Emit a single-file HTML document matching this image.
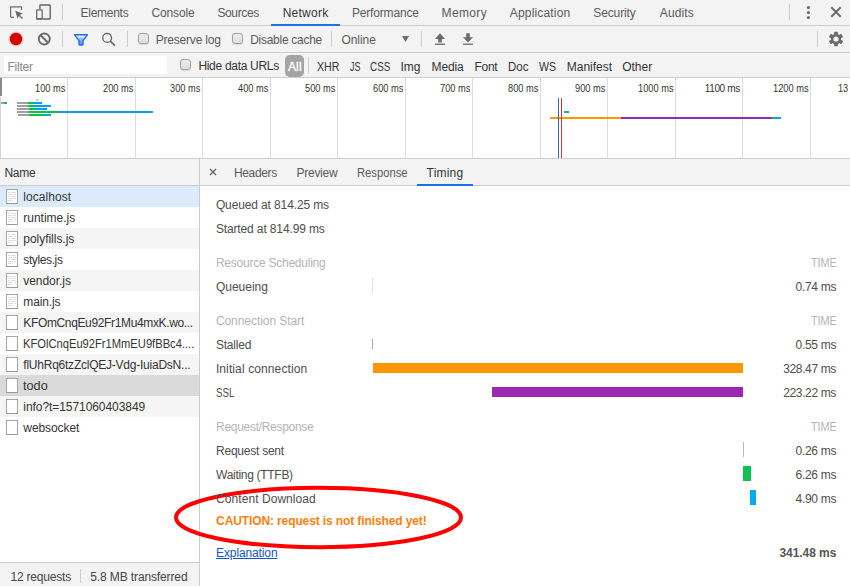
<!DOCTYPE html>
<html><head><meta charset="utf-8">
<style>
*{box-sizing:border-box;margin:0;padding:0}
html,body{width:850px;height:586px;overflow:hidden;background:#fff}
body{font-family:"Liberation Sans",sans-serif;font-size:12px;color:#333;position:relative}
.a{position:absolute;white-space:nowrap}
.t{position:absolute;white-space:nowrap;line-height:14px;height:14px}
.bar{position:absolute;left:0;width:850px;background:#f3f3f3}
.vl{position:absolute;width:1px;background:#ccc}
.hl{position:absolute;height:1px;background:#ccc}
.cb{position:absolute;width:11px;height:11px;border:1px solid #a0a0a0;border-radius:3px;background:linear-gradient(#ececec,#dedede);box-shadow:0 1px 1px rgba(0,0,0,0.12)}
.r{text-align:right}
.g{color:#aaa}
.ovl{font-size:10px;text-align:right;color:#333}
.ic{position:absolute;width:12px;height:15px;border:1px solid #a6a6a6;border-bottom-color:#989898;background:#fff}
.ic i{position:absolute;height:1px;background:#dcdcdc}
.d{color:#444}
</style></head><body>

<!-- top tab bar -->
<div class="bar" style="top:0;height:26px;border-bottom:1px solid #ccc"></div>
<div class="vl" style="left:62px;top:4px;height:16px"></div>
<div class="a" style="left:271px;top:24px;width:69px;height:2px;background:#1a73e8"></div>
<div class="vl" style="left:789px;top:4px;height:16px"></div>

<!-- second toolbar -->
<div class="bar" style="top:26px;height:27px;border-bottom:1px solid #ccc"></div>
<div class="vl" style="left:62px;top:31px;height:16px"></div>
<div class="vl" style="left:127px;top:31px;height:16px"></div>
<div class="cb" style="left:138px;top:33px"></div>
<div class="cb" style="left:232px;top:33px"></div>
<div class="vl" style="left:331px;top:31px;height:16px"></div>
<div class="vl" style="left:421px;top:31px;height:16px"></div>
<div class="vl" style="left:817px;top:31px;height:16px"></div>


<!-- icons -->
<svg class="a" style="left:0;top:0" width="850" height="53" viewBox="0 0 850 53">
<!-- inspect -->
<path d="M14 17.3 H11.4 Q10.6 17.3 10.6 16.5 V7.6 Q10.6 6.8 11.4 6.8 H20.7 Q21.5 6.8 21.5 7.6 V10" fill="none" stroke="#6b6b6b" stroke-width="1.2"/>
<path d="M15.2 10.8 L22.8 13.6 L19.9 14.9 L23 18 L22 19 L18.9 15.9 L17.6 18.8 Z" fill="#6b6b6b"/>
<!-- device -->
<path d="M39.9 9 V5.6 Q39.9 5 40.5 5 H49.6 Q50.2 5 50.2 5.6 V18.4 Q50.2 19 49.6 19 H43" fill="none" stroke="#666" stroke-width="1.4"/>
<rect x="36.7" y="9.9" width="5.5" height="9.1" rx="0.5" fill="none" stroke="#6b6b6b" stroke-width="1.3"/><rect x="36.1" y="18" width="6.7" height="1.6" fill="#6b6b6b"/>
<!-- dots -->
<circle cx="808.4" cy="7.5" r="1.6" fill="#6b6b6b"/><circle cx="808.4" cy="12.6" r="1.6" fill="#6b6b6b"/><circle cx="808.4" cy="17.6" r="1.6" fill="#6b6b6b"/>
<!-- close -->
<path d="M831.3 7.3 L840.7 16.7 M840.7 7.3 L831.3 16.7" stroke="#6b6b6b" stroke-width="2" fill="none"/>
<!-- record -->
<circle cx="16" cy="39" r="7.6" fill="#f6c5c5"/>
<circle cx="16" cy="39" r="6.2" fill="#d60000"/>
<!-- clear -->
<circle cx="44.3" cy="39" r="5.5" fill="none" stroke="#6b6b6b" stroke-width="1.9"/>
<path d="M40.3 35 L48.3 43" stroke="#6b6b6b" stroke-width="1.9"/>
<!-- funnel -->
<defs><linearGradient id="fg" x1="0" y1="0" x2="0" y2="1"><stop offset="0.15" stop-color="#e6eefc"/><stop offset="0.45" stop-color="#8db6f6"/><stop offset="1" stop-color="#4f8ef0"/></linearGradient></defs><path d="M74.6 34.8 H87.4 L83 40.6 V44.3 Q83 45 82.3 45 H79.7 Q79 45 79 44.3 V40.6 Z" fill="url(#fg)" stroke="#1a6ff0" stroke-width="1.4" stroke-linejoin="round"/>
<!-- search -->
<circle cx="107.1" cy="37.9" r="4.4" fill="none" stroke="#6b6b6b" stroke-width="1.4"/>
<path d="M110.2 41.2 L115 45.7" stroke="#6b6b6b" stroke-width="1.7"/>
<!-- dropdown -->
<path d="M402 36 H409 L405.5 42 Z" fill="#6b6b6b"/>
<!-- upload -->
<path d="M440 33.2 L445 39 H441.8 V42.5 H438.2 V39 H435 Z" fill="#6b6b6b"/>
<rect x="435" y="43.6" width="10" height="1.3" fill="#6b6b6b"/>
<!-- download -->
<path d="M466.2 33.2 H469.8 V37.2 H473 L468 42.6 L463 37.2 H466.2 Z" fill="#6b6b6b"/>
<rect x="463" y="43.6" width="10" height="1.3" fill="#6b6b6b"/>
<!-- gear -->
<g transform="translate(836 39)" fill="#6b6b6b">
<circle r="5.2"/>
<g id="tg"><rect x="-1.9" y="-7.2" width="3.8" height="14.4" rx="0.6"/></g>
<rect x="-1.9" y="-7.2" width="3.8" height="14.4" rx="0.6" transform="rotate(60)"/>
<rect x="-1.9" y="-7.2" width="3.8" height="14.4" rx="0.6" transform="rotate(120)"/>
<circle r="2.6" fill="#f3f3f3"/>
</g>
</svg>
<!-- filter bar -->
<div class="bar" style="top:53px;height:25px;border-bottom:1px solid #ccc"></div>
<div class="a" style="left:4px;top:56px;width:163px;height:18px;background:#fff"></div>
<div class="cb" style="left:180px;top:59px"></div>
<div class="a" style="left:285px;top:55px;width:19px;height:22px;border-radius:5px;background:#a3a3a3"></div>
<div class="vl" style="left:308px;top:57px;height:16px"></div>

<!-- overview -->
<div id="ov" class="a" style="left:0;top:78px;width:850px;height:81px;background:#fff;border-bottom:1px solid #ccc"></div>

<div class="vl" style="left:67px;top:78px;height:80px;background:#ddd"></div>
<div class="vl" style="left:135px;top:78px;height:80px;background:#ddd"></div>
<div class="vl" style="left:202px;top:78px;height:80px;background:#ddd"></div>
<div class="vl" style="left:270px;top:78px;height:80px;background:#ddd"></div>
<div class="vl" style="left:337px;top:78px;height:80px;background:#ddd"></div>
<div class="vl" style="left:405px;top:78px;height:80px;background:#ddd"></div>
<div class="vl" style="left:472px;top:78px;height:80px;background:#ddd"></div>
<div class="vl" style="left:540px;top:78px;height:80px;background:#ddd"></div>
<div class="vl" style="left:607px;top:78px;height:80px;background:#ddd"></div>
<div class="vl" style="left:675px;top:78px;height:80px;background:#ddd"></div>
<div class="vl" style="left:742px;top:78px;height:80px;background:#ddd"></div>
<div class="vl" style="left:810px;top:78px;height:80px;background:#ddd"></div>
<div class="a" style="left:0;top:78px;width:2px;height:18px;background:#8a8a8a"></div>
<div class="a" style="left:0;top:97px;width:1px;height:61px;background:#d4d4d4"></div>
<div class="a" style="left:16.5px;top:102px;width:11.7px;height:2px;background:#a0a0a0"></div>
<div class="a" style="left:28.2px;top:102px;width:4.9px;height:2px;background:#0cc04c"></div>
<div class="a" style="left:33.1px;top:102px;width:8.8px;height:2px;background:#03a1ef"></div>
<div class="a" style="left:16.5px;top:105px;width:11.7px;height:2px;background:#a0a0a0"></div>
<div class="a" style="left:28.2px;top:105px;width:5.8px;height:2px;background:#0cc04c"></div>
<div class="a" style="left:34px;top:105px;width:16.8px;height:2px;background:#03a1ef"></div>
<div class="a" style="left:17px;top:108px;width:11.7px;height:2px;background:#a0a0a0"></div>
<div class="a" style="left:28.7px;top:108px;width:5.9px;height:2px;background:#0cc04c"></div>
<div class="a" style="left:34.6px;top:108px;width:12.3px;height:2px;background:#03a1ef"></div>
<div class="a" style="left:17.4px;top:111px;width:11.3px;height:2px;background:#a0a0a0"></div>
<div class="a" style="left:28.7px;top:111px;width:29.2px;height:2px;background:#0cc04c"></div>
<div class="a" style="left:57.9px;top:111px;width:95.1px;height:2px;background:#03a1ef"></div>
<div class="a" style="left:17.9px;top:114px;width:10.8px;height:2px;background:#a0a0a0"></div>
<div class="a" style="left:28.7px;top:114px;width:16.0px;height:2px;background:#0cc04c"></div>
<div class="a" style="left:44.7px;top:114px;width:6.1px;height:2px;background:#03a1ef"></div>
<div class="a" style="left:1.4px;top:102px;width:2.2px;height:2px;background:#a0a0a0"></div>
<div class="a" style="left:3.6px;top:102px;width:2.0px;height:2px;background:#0cc04c"></div>
<div class="a" style="left:5.6px;top:102px;width:1.7px;height:2px;background:#03a1ef"></div>
<div class="a" style="left:36.2px;top:99px;width:2.6px;height:2px;background:#d0d0d0"></div>
<div class="a" style="left:550px;top:117px;width:71.4px;height:2px;background:#ff9800"></div>
<div class="a" style="left:621.4px;top:117px;width:150.2px;height:2px;background:#9c27b0"></div>
<div class="a" style="left:771.6px;top:117px;width:3.4px;height:2px;background:#0cc04c"></div>
<div class="a" style="left:775px;top:117px;width:6.0px;height:2px;background:#03a1ef"></div>
<div class="a" style="left:564px;top:111px;width:5.0px;height:2px;background:#26a0b5"></div>
<div class="a" style="left:558px;top:98px;width:1px;height:60px;background:#2a62d8"></div>
<div class="a" style="left:561px;top:98px;width:1px;height:60px;background:#c0392b"></div>
<!-- sidebar -->
<div class="a" style="left:0;top:159px;width:199px;height:27px;background:#f3f3f3;border-bottom:1px solid #ccc"></div>
<div class="vl" style="left:199px;top:159px;height:427px"></div>

<div class="a" style="left:0;top:186px;width:199px;height:21px;background:#dcebfb"></div>
<div class="ic" style="left:6px;top:189px"><i style="top:2px;left:1px;width:2px"></i><i style="top:2px;left:4px;width:5px"></i><i style="top:4px;left:1px;width:4px"></i><i style="top:4px;left:6px;width:3px"></i><i style="top:6px;left:1px;width:2px"></i><i style="top:6px;left:4px;width:5px"></i><i style="top:8px;left:1px;width:5px"></i><i style="top:8px;left:7px;width:2px"></i><i style="top:10px;left:1px;width:3px"></i><i style="top:10px;left:5px;width:1px"></i></div>
<div class="a" style="left:0;top:207px;width:199px;height:21px;background:#fff"></div>
<div class="ic" style="left:6px;top:210px"><i style="top:2px;left:1px;width:2px"></i><i style="top:2px;left:4px;width:5px"></i><i style="top:4px;left:1px;width:4px"></i><i style="top:4px;left:6px;width:3px"></i><i style="top:6px;left:1px;width:2px"></i><i style="top:6px;left:4px;width:5px"></i><i style="top:8px;left:1px;width:5px"></i><i style="top:8px;left:7px;width:2px"></i><i style="top:10px;left:1px;width:3px"></i><i style="top:10px;left:5px;width:1px"></i></div>
<div class="a" style="left:0;top:228px;width:199px;height:21px;background:#f5f5f5"></div>
<div class="ic" style="left:6px;top:231px"><i style="top:2px;left:1px;width:2px"></i><i style="top:2px;left:4px;width:5px"></i><i style="top:4px;left:1px;width:4px"></i><i style="top:4px;left:6px;width:3px"></i><i style="top:6px;left:1px;width:2px"></i><i style="top:6px;left:4px;width:5px"></i><i style="top:8px;left:1px;width:5px"></i><i style="top:8px;left:7px;width:2px"></i><i style="top:10px;left:1px;width:3px"></i><i style="top:10px;left:5px;width:1px"></i></div>
<div class="a" style="left:0;top:249px;width:199px;height:21px;background:#fff"></div>
<div class="ic" style="left:6px;top:252px"><i style="top:2px;left:1px;width:2px"></i><i style="top:2px;left:4px;width:5px"></i><i style="top:4px;left:1px;width:4px"></i><i style="top:4px;left:6px;width:3px"></i><i style="top:6px;left:1px;width:2px"></i><i style="top:6px;left:4px;width:5px"></i><i style="top:8px;left:1px;width:5px"></i><i style="top:8px;left:7px;width:2px"></i><i style="top:10px;left:1px;width:3px"></i><i style="top:10px;left:5px;width:1px"></i></div>
<div class="a" style="left:0;top:270px;width:199px;height:21px;background:#f5f5f5"></div>
<div class="ic" style="left:6px;top:273px"><i style="top:2px;left:1px;width:2px"></i><i style="top:2px;left:4px;width:5px"></i><i style="top:4px;left:1px;width:4px"></i><i style="top:4px;left:6px;width:3px"></i><i style="top:6px;left:1px;width:2px"></i><i style="top:6px;left:4px;width:5px"></i><i style="top:8px;left:1px;width:5px"></i><i style="top:8px;left:7px;width:2px"></i><i style="top:10px;left:1px;width:3px"></i><i style="top:10px;left:5px;width:1px"></i></div>
<div class="a" style="left:0;top:291px;width:199px;height:21px;background:#fff"></div>
<div class="ic" style="left:6px;top:294px"><i style="top:2px;left:1px;width:2px"></i><i style="top:2px;left:4px;width:5px"></i><i style="top:4px;left:1px;width:4px"></i><i style="top:4px;left:6px;width:3px"></i><i style="top:6px;left:1px;width:2px"></i><i style="top:6px;left:4px;width:5px"></i><i style="top:8px;left:1px;width:5px"></i><i style="top:8px;left:7px;width:2px"></i><i style="top:10px;left:1px;width:3px"></i><i style="top:10px;left:5px;width:1px"></i></div>
<div class="a" style="left:0;top:312px;width:199px;height:21px;background:#f5f5f5"></div>
<div class="ic" style="left:6px;top:315px"></div>
<div class="a" style="left:0;top:333px;width:199px;height:21px;background:#fff"></div>
<div class="ic" style="left:6px;top:336px"></div>
<div class="a" style="left:0;top:354px;width:199px;height:21px;background:#f5f5f5"></div>
<div class="ic" style="left:6px;top:357px"></div>
<div class="a" style="left:0;top:375px;width:199px;height:21px;background:#dadada"></div>
<div class="ic" style="left:6px;top:378px"></div>
<div class="a" style="left:0;top:396px;width:199px;height:21px;background:#f5f5f5"></div>
<div class="ic" style="left:6px;top:399px"></div>
<div class="a" style="left:0;top:417px;width:199px;height:21px;background:#fff"></div>
<div class="ic" style="left:6px;top:420px"></div>
<!-- detail tabs -->
<div class="a" style="left:200px;top:159px;width:650px;height:27px;background:#f3f3f3;border-bottom:1px solid #ccc"></div>

<div class="a" style="left:417px;top:184px;width:56px;height:2px;background:#1a73e8"></div>
<svg class="a" style="left:209px;top:168px" width="8" height="8" viewBox="0 0 8 8"><path d="M1 1 L7 7 M7 1 L1 7" stroke="#606060" stroke-width="1.3" fill="none"/></svg>
<div class="a" style="left:372px;top:278px;width:1px;height:15px;background:#e0e0e0"></div>
<div class="a" style="left:372px;top:339px;width:1px;height:10px;background:#aaa"></div>
<div class="a" style="left:373px;top:363px;width:370px;height:10px;background:#ff9800"></div>
<div class="a" style="left:492px;top:387px;width:251px;height:10px;background:#9c27b0"></div>
<div class="a" style="left:743px;top:442px;width:1px;height:15px;background:#b0bec5"></div>
<div class="a" style="left:743px;top:466px;width:8px;height:15px;background:#0cc250"></div>
<div class="a" style="left:750px;top:490px;width:6px;height:15px;background:#03a9f4"></div>
<svg class="a" style="left:0;top:0" width="850" height="586"><ellipse cx="318.5" cy="517.5" rx="142.5" ry="29.7" fill="none" stroke="#f00" stroke-width="4"/></svg>
<!-- status bar -->
<div class="a" style="left:0;top:562px;width:199px;height:24px;background:#f3f3f3;border-top:1px solid #ccc"></div>
<div class="vl" style="left:80px;top:569px;height:14px"></div>

<div class="t" style="left:80.5px;top:6px;letter-spacing:-0.262px;color:#5a5a5a">Elements</div>
<div class="t" style="left:151.4px;top:6px;letter-spacing:-0.122px;color:#5a5a5a">Console</div>
<div class="t" style="left:217.4px;top:6px;letter-spacing:-0.355px;color:#5a5a5a">Sources</div>
<div class="t" style="left:282.7px;top:6px;letter-spacing:0.247px;color:#333">Network</div>
<div class="t" style="left:351.9px;top:6px;letter-spacing:-0.160px;color:#5a5a5a">Performance</div>
<div class="t" style="left:441.6px;top:6px;letter-spacing:0.351px;color:#5a5a5a">Memory</div>
<div class="t" style="left:509.8px;top:6px;letter-spacing:0.168px;color:#5a5a5a">Application</div>
<div class="t" style="left:593.3px;top:6px;letter-spacing:-0.123px;color:#5a5a5a">Security</div>
<div class="t" style="left:659.8px;top:6px;letter-spacing:0.128px;color:#5a5a5a">Audits</div>
<div class="t" style="left:155.7px;top:33px;letter-spacing:-0.198px;color:#5a5a5a">Preserve log</div>
<div class="t" style="left:250.2px;top:33px;letter-spacing:-0.273px;color:#5a5a5a">Disable cache</div>
<div class="t" style="left:341.4px;top:33px;letter-spacing:-0.037px;color:#5a5a5a">Online</div>
<div class="t" style="left:7.5px;top:60px;letter-spacing:-0.234px;color:#8a8a8a">Filter</div>
<div class="t" style="left:198.4px;top:59px;letter-spacing:-0.301px;color:#333">Hide data URLs</div>
<div class="t" style="left:287.9px;top:60px;letter-spacing:0.228px;color:#fff;-webkit-text-stroke:0.35px #fff;text-shadow:0 1px 0 rgba(0,0,0,0.15)">All</div>
<div class="t" style="left:316.9px;top:60px;transform:scaleX(0.8878);transform-origin:0 0;color:#333">XHR</div>
<div class="t" style="left:349.8px;top:60px;transform:scaleX(0.7420);transform-origin:0 0;color:#333">JS</div>
<div class="t" style="left:370.2px;top:60px;transform:scaleX(0.8223);transform-origin:0 0;color:#333">CSS</div>
<div class="t" style="left:400.4px;top:60px;letter-spacing:-0.008px;color:#333">Img</div>
<div class="t" style="left:431.6px;top:60px;letter-spacing:-0.147px;color:#333">Media</div>
<div class="t" style="left:474.5px;top:60px;letter-spacing:-0.272px;color:#333">Font</div>
<div class="t" style="left:508.1px;top:60px;transform:scaleX(0.9605);transform-origin:0 0;color:#333">Doc</div>
<div class="t" style="left:539.0px;top:60px;transform:scaleX(0.8840);transform-origin:0 0;color:#333">WS</div>
<div class="t" style="left:566.8px;top:60px;letter-spacing:-0.008px;color:#333">Manifest</div>
<div class="t" style="left:622.2px;top:60px;letter-spacing:-0.004px;color:#333">Other</div>
<div class="t" style="left:35.0px;top:83px;font-size:10px;line-height:12px;height:12px;transform:scaleX(0.9239);transform-origin:0 0;color:#333">100 ms</div>
<div class="t" style="left:103.0px;top:83px;font-size:10px;line-height:12px;height:12px;transform:scaleX(0.9239);transform-origin:0 0;color:#333">200 ms</div>
<div class="t" style="left:170.0px;top:83px;font-size:10px;line-height:12px;height:12px;transform:scaleX(0.9239);transform-origin:0 0;color:#333">300 ms</div>
<div class="t" style="left:238.0px;top:83px;font-size:10px;line-height:12px;height:12px;transform:scaleX(0.9239);transform-origin:0 0;color:#333">400 ms</div>
<div class="t" style="left:305.0px;top:83px;font-size:10px;line-height:12px;height:12px;transform:scaleX(0.9239);transform-origin:0 0;color:#333">500 ms</div>
<div class="t" style="left:373.0px;top:83px;font-size:10px;line-height:12px;height:12px;transform:scaleX(0.9239);transform-origin:0 0;color:#333">600 ms</div>
<div class="t" style="left:440.0px;top:83px;font-size:10px;line-height:12px;height:12px;transform:scaleX(0.9239);transform-origin:0 0;color:#333">700 ms</div>
<div class="t" style="left:508.0px;top:83px;font-size:10px;line-height:12px;height:12px;transform:scaleX(0.9239);transform-origin:0 0;color:#333">800 ms</div>
<div class="t" style="left:575.0px;top:83px;font-size:10px;line-height:12px;height:12px;transform:scaleX(0.9239);transform-origin:0 0;color:#333">900 ms</div>
<div class="t" style="left:637.7px;top:83px;font-size:10px;line-height:12px;height:12px;transform:scaleX(0.9281);transform-origin:0 0;color:#333">1000 ms</div>
<div class="t" style="left:704.7px;top:83px;font-size:10px;line-height:12px;height:12px;letter-spacing:-0.337px;color:#333">1100 ms</div>
<div class="t" style="left:772.7px;top:83px;font-size:10px;line-height:12px;height:12px;transform:scaleX(0.9281);transform-origin:0 0;color:#333">1200 ms</div>
<div class="t" style="left:838.0px;top:83px;font-size:10px;line-height:12px;height:12px;transform:scaleX(0.9079);transform-origin:0 0;color:#333">13</div>
<div class="t" style="left:4.5px;top:166px;letter-spacing:-0.305px;color:#333">Name</div>
<div class="t" style="left:23.3px;top:190px;letter-spacing:0.053px;color:#333">localhost</div>
<div class="t" style="left:23.3px;top:211px;letter-spacing:-0.013px;color:#333">runtime.js</div>
<div class="t" style="left:23.3px;top:232px;letter-spacing:-0.033px;color:#333">polyfills.js</div>
<div class="t" style="left:23.3px;top:253px;letter-spacing:-0.386px;color:#333">styles.js</div>
<div class="t" style="left:23.3px;top:274px;letter-spacing:-0.054px;color:#333">vendor.js</div>
<div class="t" style="left:23.3px;top:295px;letter-spacing:-0.136px;color:#333">main.js</div>
<div class="t" style="left:23.3px;top:316px;letter-spacing:-0.357px;color:#333">KFOmCnqEu92Fr1Mu4mxK.wo...</div>
<div class="t" style="left:23.3px;top:337px;transform:scaleX(0.9307);transform-origin:0 0;color:#333">KFOlCnqEu92Fr1MmEU9fBBc4....</div>
<div class="t" style="left:23.3px;top:358px;letter-spacing:-0.233px;color:#333">flUhRq6tzZclQEJ-Vdg-IuiaDsN...</div>
<div class="t" style="left:23.3px;top:379px;transform:scaleX(1.0574);transform-origin:0 0;color:#333">todo</div>
<div class="t" style="left:23.3px;top:400px;letter-spacing:-0.064px;color:#333">info?t=1571060403849</div>
<div class="t" style="left:23.3px;top:421px;letter-spacing:-0.075px;color:#333">websocket</div>
<div class="t" style="left:233.9px;top:166px;letter-spacing:-0.327px;color:#5a5a5a">Headers</div>
<div class="t" style="left:296.5px;top:166px;letter-spacing:-0.265px;color:#5a5a5a">Preview</div>
<div class="t" style="left:356.8px;top:166px;transform:scaleX(0.9362);transform-origin:0 0;color:#5a5a5a">Response</div>
<div class="t" style="left:426.6px;top:166px;letter-spacing:0.187px;color:#333">Timing</div>
<div class="t" style="left:215.9px;top:198px;letter-spacing:-0.123px;color:#4d4d4d">Queued at 814.25 ms</div>
<div class="t" style="left:215.9px;top:222px;letter-spacing:-0.132px;color:#4d4d4d">Started at 814.99 ms</div>
<div class="t" style="left:215.9px;top:256px;letter-spacing:-0.238px;color:#b4b4b4">Resource Scheduling</div>
<div class="t" style="left:215.9px;top:280px;letter-spacing:-0.007px;color:#4d4d4d">Queueing</div>
<div class="t" style="left:215.9px;top:314px;letter-spacing:-0.059px;color:#b4b4b4">Connection Start</div>
<div class="t" style="left:215.9px;top:338px;letter-spacing:-0.184px;color:#4d4d4d">Stalled</div>
<div class="t" style="left:215.9px;top:362px;letter-spacing:0.112px;color:#4d4d4d">Initial connection</div>
<div class="t" style="left:215.9px;top:386px;transform:scaleX(0.8110);transform-origin:0 0;color:#4d4d4d">SSL</div>
<div class="t" style="left:216.1px;top:420px;letter-spacing:-0.299px;color:#b4b4b4">Request/Response</div>
<div class="t" style="left:216.1px;top:444px;letter-spacing:-0.247px;color:#4d4d4d">Request sent</div>
<div class="t" style="left:216.1px;top:468px;letter-spacing:-0.299px;color:#4d4d4d">Waiting (TTFB)</div>
<div class="t" style="left:216.1px;top:492px;letter-spacing:0.058px;color:#4d4d4d">Content Download</div>
<div class="t" style="left:216.1px;top:514px;letter-spacing:-0.114px;color:#ff7f0e;font-weight:bold">CAUTION: request is not finished yet!</div>
<div class="t" style="left:216.1px;top:546px;letter-spacing:-0.122px;color:#1155cc;text-decoration:underline">Explanation</div>
<div class="t" style="left:810.6px;top:256px;transform:scaleX(0.8998);transform-origin:0 0;color:#b4b4b4">TIME</div>
<div class="t" style="left:795.6px;top:280px;letter-spacing:-0.315px;color:#4d4d4d">0.74 ms</div>
<div class="t" style="left:810.6px;top:314px;transform:scaleX(0.8998);transform-origin:0 0;color:#b4b4b4">TIME</div>
<div class="t" style="left:795.6px;top:338px;letter-spacing:-0.315px;color:#4d4d4d">0.55 ms</div>
<div class="t" style="left:783.2px;top:362px;letter-spacing:-0.356px;color:#4d4d4d">328.47 ms</div>
<div class="t" style="left:783.2px;top:386px;letter-spacing:-0.356px;color:#4d4d4d">223.22 ms</div>
<div class="t" style="left:810.6px;top:420px;transform:scaleX(0.8998);transform-origin:0 0;color:#b4b4b4">TIME</div>
<div class="t" style="left:795.6px;top:444px;letter-spacing:-0.315px;color:#4d4d4d">0.26 ms</div>
<div class="t" style="left:795.6px;top:468px;letter-spacing:-0.315px;color:#4d4d4d">6.26 ms</div>
<div class="t" style="left:795.6px;top:492px;letter-spacing:-0.315px;color:#4d4d4d">4.90 ms</div>
<div class="t" style="left:779.5px;top:546px;letter-spacing:-0.061px;color:#555;font-weight:bold">341.48 ms</div>
<div class="t" style="left:10.5px;top:570px;letter-spacing:-0.202px;color:#444">12 requests</div>
<div class="t" style="left:90.3px;top:570px;letter-spacing:-0.122px;color:#444">5.8 MB transferred</div>
</body></html>
